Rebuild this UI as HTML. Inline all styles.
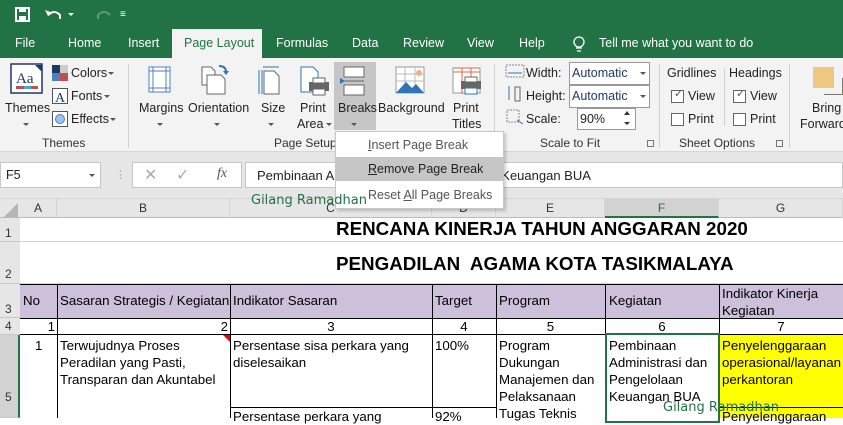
<!DOCTYPE html>
<html><head><meta charset="utf-8">
<style>
*{box-sizing:border-box;margin:0;padding:0}
body{width:843px;height:418px;overflow:hidden;position:relative;background:#fff;font-family:"Liberation Sans",sans-serif;font-size:12px;color:#222}
.a{position:absolute}
.tab{position:absolute;top:36px;color:#fff;font-family:"Liberation Sans",sans-serif;font-size:12.5px}
.rb{position:absolute;font-family:"Liberation Sans",sans-serif;font-size:12.5px;color:#222;white-space:nowrap}
.gl{position:absolute;top:136px;font-family:"Liberation Sans",sans-serif;font-size:12px;color:#333}
.sep{position:absolute;top:64px;width:1px;height:84px;background:#d0d0d0}
.car{position:absolute;width:0;height:0;border-left:3px solid transparent;border-right:3px solid transparent;border-top:3px solid #555}
.c{position:absolute;font-family:"Liberation Sans",sans-serif;font-size:13.3px;color:#000;line-height:17px}
.hd{position:absolute;top:199px;height:19px;font-size:12px;color:#333;text-align:center;line-height:19px;border-right:1px solid #d4d4d4}
.rh{position:absolute;left:0;width:20px;font-size:12px;color:#333;background:#e6e6e6;border-bottom:1px solid #c8c8c8;padding-left:5px}
.v{position:absolute;background:#000;width:1px}
.h{position:absolute;background:#000;height:1px}
.cb{position:absolute;width:13px;height:13px;border:1px solid #666;background:#fff}
</style></head><body>
<div class="a" style="left:0;top:0;width:843px;height:58px;background:#217346"></div>
<svg class="a" style="left:14px;top:6px" width="120" height="18">
<rect x="2" y="2" width="13" height="13" fill="none" stroke="#fff" stroke-width="2"/><rect x="5" y="2" width="7" height="4" fill="#fff"/><rect x="5" y="10" width="7" height="5" fill="#fff"/>
<path d="M34 9 q6-6 12 0 v4" fill="none" stroke="#fff" stroke-width="2"/><path d="M31 4 l3 6 5-3z" fill="#fff"/>
<path d="M54 7 l3 3 3-3z" fill="#fff"/>
<path d="M96 9 q-6-6-12 0 v4" fill="none" stroke="#5c9a78" stroke-width="2"/>
</svg>
<div class="a" style="left:120px;top:9px;color:#fff;font-size:10px">&#8801;</div>
<div class="a" style="left:172px;top:29px;width:90px;height:30px;background:#f3f3f3"></div>
<div class="tab" style="left:15px">File</div>
<div class="tab" style="left:68px">Home</div>
<div class="tab" style="left:128px">Insert</div>
<div class="tab" style="left:184px;color:#217346">Page Layout</div>
<div class="tab" style="left:276px">Formulas</div>
<div class="tab" style="left:352px">Data</div>
<div class="tab" style="left:403px">Review</div>
<div class="tab" style="left:467px">View</div>
<div class="tab" style="left:519px">Help</div>
<svg class="a" style="left:572px;top:36px" width="14" height="18"><circle cx="7" cy="6" r="5" fill="none" stroke="#fff" stroke-width="1.3"/><path d="M4 12h6M5 15h4" stroke="#fff" stroke-width="1.3"/></svg>
<div class="tab" style="left:599px">Tell me what you want to do</div>
<div class="a" style="left:0;top:58px;width:843px;height:94px;background:#f3f3f3;border-bottom:1px solid #d6d6d6"></div>
<div class="a" style="left:0;top:152px;width:843px;height:47px;background:#e6e6e6"></div>
<svg class="a" style="left:10px;top:63px" width="34" height="32"><rect x="1" y="1" width="31" height="29" fill="#fff" stroke="#1f3864" stroke-width="1.5"/><text x="6" y="20" font-family="Liberation Serif" font-size="15" fill="#1f3864">Aa</text><rect x="6" y="23" width="22" height="3" fill="#c0504d"/><rect x="14" y="23" width="7" height="3" fill="#4bacc6"/><path d="M25 2 h7 v7z" fill="#1f3864"/></svg>
<div class="rb" style="left:5px;top:101px">Themes</div><div class="car" style="left:23px;top:123px"></div>
<svg class="a" style="left:52px;top:65px" width="16" height="16"><rect x="0" y="0" width="8" height="8" fill="#1f3864"/><rect x="8" y="0" width="8" height="8" fill="#ccc"/><rect x="0" y="8" width="8" height="8" fill="#4f81bd"/><rect x="8" y="8" width="8" height="8" fill="#c0504d"/></svg>
<div class="rb" style="left:71px;top:66px">Colors</div><div class="car" style="left:108px;top:72px"></div>
<svg class="a" style="left:52px;top:88px" width="16" height="16"><rect x="0.5" y="0.5" width="15" height="15" fill="#fff" stroke="#555"/><text x="3" y="14" font-family="Liberation Serif" font-size="14" fill="#1f3864">A</text></svg>
<div class="rb" style="left:71px;top:89px">Fonts</div><div class="car" style="left:104px;top:95px"></div>
<svg class="a" style="left:52px;top:111px" width="16" height="16"><rect x="0.5" y="0.5" width="15" height="15" fill="#fff" stroke="#555"/><circle cx="8" cy="8" r="4.5" fill="#9cc3f0" stroke="#4f81bd"/></svg>
<div class="rb" style="left:71px;top:112px">Effects</div><div class="car" style="left:110px;top:118px"></div>
<div class="gl" style="left:42px">Themes</div>
<div class="sep" style="left:128px"></div>
<svg class="a" style="left:148px;top:66px" width="24" height="28"><rect x="1" y="1" width="21" height="25" fill="#fff" stroke="#4f81bd"/><path d="M5 1v25M18 1v25M1 5h21M1 22h21" stroke="#4f81bd"/></svg>
<div class="rb" style="left:139px;top:101px">Margins</div><div class="car" style="left:157px;top:123px"></div>
<svg class="a" style="left:201px;top:64px" width="30" height="32"><path d="M1 3h9l4 4v14H1z" fill="#fff" stroke="#666"/><path d="M6 11h14l4 4v15H6z" fill="#fff" stroke="#666"/><path d="M18 2 q7 0 7 6" fill="none" stroke="#2e75b6" stroke-width="2"/><path d="M22 7l3 4 3-4z" fill="#2e75b6"/></svg>
<div class="rb" style="left:188px;top:101px">Orientation</div><div class="car" style="left:214px;top:123px"></div>
<svg class="a" style="left:258px;top:65px" width="26" height="30"><path d="M5 2h16" stroke="#2e75b6"/><path d="M1 5v24M4 5v24" stroke="#2e75b6"/><path d="M6 6h10l5 5v18H6z" fill="#fff" stroke="#666"/></svg>
<div class="rb" style="left:261px;top:101px">Size</div><div class="car" style="left:268px;top:123px"></div>
<svg class="a" style="left:299px;top:65px" width="32" height="32"><path d="M2 2h12l5 5v20H2z" fill="#fff" stroke="#2e75b6"/><rect x="10" y="17" width="20" height="9" fill="#666"/><rect x="14" y="13" width="12" height="5" fill="#fff" stroke="#666"/><rect x="14" y="24" width="12" height="6" fill="#fff" stroke="#666"/></svg>
<div class="rb" style="left:300px;top:101px">Print</div><div class="rb" style="left:297px;top:117px">Area</div><div class="car" style="left:326px;top:123px"></div>
<div class="a" style="left:334px;top:62px;width:42px;height:68px;background:#c6c6c6"></div>
<svg class="a" style="left:339px;top:66px" width="28" height="30"><rect x="5" y="1" width="20" height="10" fill="#fff" stroke="#666"/><rect x="5" y="19" width="20" height="10" fill="#fff" stroke="#666"/><path d="M1 12 l5 3 -5 3z" fill="#2e75b6"/><path d="M5 15h20" stroke="#666"/></svg>
<div class="rb" style="left:338px;top:101px">Breaks</div><div class="car" style="left:351px;top:123px"></div>
<svg class="a" style="left:395px;top:66px" width="30" height="28"><rect x="1" y="1" width="28" height="26" fill="#fff" stroke="#999"/><path d="M1 8h28M1 15h28M10 1v26M20 1v26" stroke="#bbb"/><path d="M1 27l10-11 6 6 4-4 8 9z" fill="#2e75b6"/><circle cx="24" cy="7" r="3" fill="#f4b183"/></svg>
<div class="rb" style="left:378px;top:101px">Background</div>
<svg class="a" style="left:452px;top:67px" width="30" height="28"><rect x="1" y="1" width="27" height="25" fill="#fff" stroke="#999"/><path d="M1 1h27M1 5h27M10 1v26M19 1v26" stroke="#e0664c"/><rect x="9" y="14" width="20" height="8" fill="#666"/><rect x="13" y="10" width="12" height="5" fill="#fff" stroke="#666"/><rect x="13" y="21" width="12" height="6" fill="#fff" stroke="#2e75b6"/></svg>
<div class="rb" style="left:453px;top:101px">Print</div><div class="rb" style="left:452px;top:117px">Titles</div>
<div class="gl" style="left:274px">Page Setup</div>
<div class="sep" style="left:494px"></div>
<svg class="a" style="left:505px;top:64px" width="20" height="66"><rect x="1" y="1" width="18" height="12" fill="none" stroke="#888" stroke-dasharray="2 1"/><path d="M3 9h14" stroke="#2e75b6"/><path d="M4 22v14" stroke="#2e75b6"/><rect x="10" y="23" width="5" height="14" fill="none" stroke="#666"/><rect x="2" y="46" width="12" height="12" fill="none" stroke="#888" stroke-dasharray="2 1"/><path d="M12 56l6 4" stroke="#2e75b6"/></svg>
<div class="rb" style="left:526px;top:66px">Width:</div>
<div class="rb" style="left:526px;top:89px">Height:</div>
<div class="rb" style="left:526px;top:112px">Scale:</div>
<div class="a" style="left:569px;top:62px;width:81px;height:23px;background:#fff;border:1px solid #999"></div>
<div class="rb" style="left:572px;top:66px;color:#1f3864">Automatic</div><div class="car" style="left:640px;top:72px"></div>
<div class="a" style="left:569px;top:85px;width:81px;height:23px;background:#fff;border:1px solid #999"></div>
<div class="rb" style="left:572px;top:89px;color:#1f3864">Automatic</div><div class="car" style="left:640px;top:95px"></div>
<div class="a" style="left:577px;top:108px;width:59px;height:22px;background:#fff;border:1px solid #999"></div>
<div class="rb" style="left:580px;top:112px">90%</div>
<div class="a" style="left:624px;top:111px;border-left:3px solid transparent;border-right:3px solid transparent;border-bottom:4px solid #333"></div>
<div class="car" style="left:624px;top:122px;border-top-color:#333"></div>
<div class="gl" style="left:540px">Scale to Fit</div>
<div class="a" style="left:647px;top:140px;width:7px;height:7px;border:1px solid #777"></div>
<div class="sep" style="left:659px"></div>
<div class="rb" style="left:667px;top:66px">Gridlines</div>
<div class="rb" style="left:729px;top:66px">Headings</div>
<div class="a" style="left:724px;top:68px;width:1px;height:58px;background:#d0d0d0"></div>
<div class="cb" style="left:671px;top:90px"></div><div class="rb" style="left:671px;top:87px;font-size:11px;color:#555">&nbsp;&#10003;</div>
<div class="rb" style="left:688px;top:89px">View</div>
<div class="cb" style="left:671px;top:113px"></div><div class="rb" style="left:688px;top:112px">Print</div>
<div class="cb" style="left:733px;top:90px"></div><div class="rb" style="left:733px;top:87px;font-size:11px;color:#555">&nbsp;&#10003;</div>
<div class="rb" style="left:750px;top:89px">View</div>
<div class="cb" style="left:733px;top:113px"></div><div class="rb" style="left:750px;top:112px">Print</div>
<div class="gl" style="left:679px">Sheet Options</div>
<div class="a" style="left:776px;top:140px;width:7px;height:7px;border:1px solid #777"></div>
<div class="sep" style="left:789px"></div>
<div class="a" style="left:813px;top:67px;width:21px;height:21px;background:#eec87e"></div>
<div class="a" style="left:824px;top:78px;width:19px;height:17px;border:1px solid #777;border-top:none;border-left:none"></div>
<div class="rb" style="left:812px;top:101px">Bring</div><div class="rb" style="left:800px;top:117px">Forward</div>
<div class="a" style="left:0;top:162px;width:101px;height:26px;background:#fff;border:1px solid #c6c6c6"></div>
<div class="rb" style="left:6px;top:168px">F5</div><div class="car" style="left:89px;top:174px"></div>
<div class="a" style="left:115px;top:168px;color:#aaa;font-size:11px">&#8942;</div>
<div class="a" style="left:132px;top:162px;width:110px;height:26px;background:#fff;border:1px solid #c6c6c6"></div>
<div class="a" style="left:144px;top:165px;color:#aaa;font-size:16px">&#10005;</div>
<div class="a" style="left:176px;top:165px;color:#aaa;font-size:16px">&#10003;</div>
<div class="a" style="left:217px;top:166px;color:#555;font-family:'Liberation Serif';font-style:italic;font-size:14px">fx</div>
<div class="a" style="left:245px;top:162px;width:598px;height:26px;background:#fff;border:1px solid #c6c6c6"></div>
<div class="rb" style="left:257px;top:168px;font-size:13px">Pembinaan Administrasi dan Pengelolaan Keuangan BUA</div>
<div class="a" style="left:0;top:198px;width:843px;height:20px;background:#e6e6e6;border-bottom:1px solid #bbb;border-top:1px solid #d4d4d4"></div>
<svg class="a" style="left:4px;top:203px" width="14" height="14"><path d="M14 0v14H0z" fill="#b5b5b5"/></svg>
<div class="hd" style="left:20px;width:37px">A</div>
<div class="hd" style="left:57px;width:173px">B</div>
<div class="hd" style="left:230px;width:202px">C</div>
<div class="hd" style="left:432px;width:64px">D</div>
<div class="hd" style="left:496px;width:109px">E</div>
<div class="hd" style="left:605px;width:114px;background:#d2d2d2;border-bottom:2px solid #217346;color:#217346">F</div>
<div class="hd" style="left:719px;width:124px">G</div>
<div class="rh" style="top:218px;height:24px;padding-top:8px">1</div>
<div class="rh" style="top:242px;height:42px;padding-top:25px">2</div>
<div class="rh" style="top:284px;height:34px;padding-top:18px">3</div>
<div class="rh" style="top:318px;height:17px;padding-top:1px">4</div>
<div class="rh" style="top:335px;height:83px;padding-top:55px;background:#d2d2d2;border-right:2px solid #217346">5</div>
<div class="a" style="left:20px;top:241px;width:823px;height:1px;background:#d4d4d4"></div>
<div class="a" style="left:20px;top:283px;width:823px;height:1px;background:#d4d4d4"></div>
<div class="c" style="left:336px;top:218px;font-weight:bold;font-size:18.8px;line-height:22px">RENCANA KINERJA TAHUN ANGGARAN 2020</div>
<div class="c" style="left:336px;top:253px;font-weight:bold;font-size:18.8px;line-height:22px">PENGADILAN&nbsp; AGAMA KOTA TASIKMALAYA</div>
<div class="a" style="left:20px;top:284px;width:823px;height:34px;background:#ccc0da"></div>
<div class="a" style="left:719px;top:335px;width:124px;height:83px;background:#ffff00"></div>
<div class="h" style="left:20px;top:284px;width:823px"></div>
<div class="h" style="left:20px;top:318px;width:823px"></div>
<div class="h" style="left:20px;top:334px;width:823px"></div>
<div class="h" style="left:230px;top:407px;width:266px"></div>
<div class="h" style="left:719px;top:407px;width:124px"></div>
<div class="v" style="left:57px;top:284px;height:134px"></div>
<div class="v" style="left:230px;top:284px;height:134px"></div>
<div class="v" style="left:432px;top:284px;height:134px"></div>
<div class="v" style="left:496px;top:284px;height:134px"></div>
<div class="v" style="left:605px;top:284px;height:134px"></div>
<div class="v" style="left:719px;top:284px;height:134px"></div>
<svg class="a" style="left:223px;top:335px" width="7" height="7"><path d="M0 0h7v7z" fill="#e00"/></svg>
<div class="a" style="left:605px;top:333px;width:115px;height:90px;border:2px solid #217346"></div>
<div class="c" style="left:23px;top:292px">No</div>
<div class="c" style="left:60px;top:292px">Sasaran Strategis / Kegiatan</div>
<div class="c" style="left:233px;top:292px">Indikator Sasaran</div>
<div class="c" style="left:435px;top:292px">Target</div>
<div class="c" style="left:499px;top:292px">Program</div>
<div class="c" style="left:609px;top:292px">Kegiatan</div>
<div class="c" style="left:722px;top:285px">Indikator Kinerja<br>Kegiatan</div>
<div class="c" style="left:20px;top:318px;width:35px;text-align:right">1</div>
<div class="c" style="left:57px;top:318px;width:171px;text-align:right">2</div>
<div class="c" style="left:230px;top:318px;width:202px;text-align:center">3</div>
<div class="c" style="left:432px;top:318px;width:64px;text-align:center">4</div>
<div class="c" style="left:496px;top:318px;width:109px;text-align:center">5</div>
<div class="c" style="left:605px;top:318px;width:114px;text-align:center">6</div>
<div class="c" style="left:719px;top:318px;width:124px;text-align:center">7</div>
<div class="c" style="left:35px;top:337px">1</div>
<div class="c" style="left:60px;top:337px">Terwujudnya Proses<br>Peradilan yang Pasti,<br>Transparan dan Akuntabel</div>
<div class="c" style="left:233px;top:337px">Persentase sisa perkara yang<br>diselesaikan</div>
<div class="c" style="left:233px;top:408px">Persentase perkara yang</div>
<div class="c" style="left:435px;top:337px">100%</div>
<div class="c" style="left:435px;top:408px">92%</div>
<div class="c" style="left:499px;top:337px">Program<br>Dukungan<br>Manajemen dan<br>Pelaksanaan<br>Tugas Teknis</div>
<div class="c" style="left:609px;top:337px">Pembinaan<br>Administrasi dan<br>Pengelolaan<br>Keuangan BUA</div>
<div class="c" style="left:722px;top:337px">Penyelenggaraan<br>operasional/layanan<br>perkantoran</div>
<div class="c" style="left:722px;top:408px">Penyelenggaraan</div>
<div class="a" style="left:335px;top:131px;width:169px;height:78px;background:#fff;border:1px solid #c6c6c6;box-shadow:2px 2px 3px rgba(0,0,0,.2)"></div>
<div class="a" style="left:336px;top:157px;width:167px;height:24px;background:#c6c6c6"></div>
<div class="rb" style="left:368px;top:138px;color:#555"><u>I</u>nsert Page Break</div>
<div class="rb" style="left:368px;top:162px"><u>R</u>emove Page Break</div>
<div class="rb" style="left:368px;top:188px;color:#555">Reset <u>A</u>ll Page Breaks</div>
<div class="a" style="left:251px;top:193px;color:#217346;font-size:13px;font-family:'DejaVu Sans',sans-serif;z-index:5">Gilang Ramadhan</div>
<div class="a" style="left:663px;top:400px;color:#217346;font-size:13px;font-family:'DejaVu Sans',sans-serif">Gilang Ramadhan</div>
</body></html>
